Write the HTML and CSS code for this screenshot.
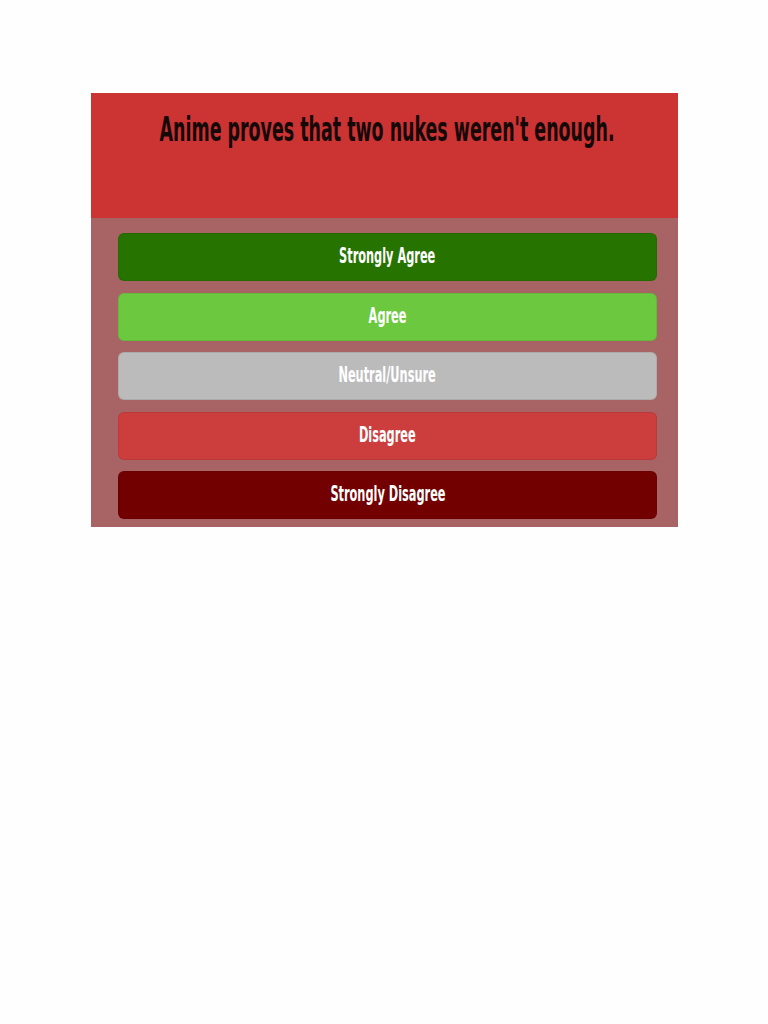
FILE: index.html
```html
<!DOCTYPE html>
<html lang="en">
<head>
    <meta charset="UTF-8" />
    <meta name="viewport" content="width=device-width, initial-scale=1.0" />
    <title>Quiz</title>
    <link rel="stylesheet" href="styles.css">
</head>
<body>
    <div class="card">
        <div class="question">
            <h2><span class="squeeze">Anime proves that two nukes weren't enough.</span></h2>
        </div>
        <div class="answers">
            <button class="answer strong-agree"><span class="squeeze">Strongly Agree</span></button>
            <button class="answer agree"><span class="squeeze">Agree</span></button>
            <button class="answer neutral"><span class="squeeze">Neutral/Unsure</span></button>
            <button class="answer disagree"><span class="squeeze">Disagree</span></button>
            <button class="answer strong-disagree"><span class="squeeze">Strongly Disagree</span></button>
        </div>
    </div>
</body>
</html>
```

FILE: styles.css
```css
body {
    margin: 0;
    background-color: #fefefe;
    font-family: "DejaVu Sans Condensed", "DejaVu Sans", sans-serif;
}
.card {
    width: 587px;
    margin-left: 91px;
    margin-top: 93px;
}
.question {
    height: 125px;
    background-color: #cc3333;
    padding-top: 16px;
    box-sizing: border-box;
    overflow: hidden;
}
h2 {
    margin: 0;
    display: flex;
    justify-content: center;
    font-size: 34px;
    font-weight: 700;
    line-height: 40px;
    color: #140808;
    padding-left: 6px;
}
.squeeze {
    display: inline-block;
    transform: scaleX(0.57);
    white-space: nowrap;
}
.answers {
    background-color: #a86464;
    padding: 15px 21px 8px 27px;
    display: flex;
    flex-direction: column;
    gap: 11.5px;
}
.answer {
    height: 48px;
    border: 1px solid rgba(0, 0, 0, 0.08);
    border-radius: 6px;
    color: white;
    font-family: inherit;
    font-size: 21px;
    font-weight: 700;
    cursor: pointer;
    display: flex;
    justify-content: center;
    align-items: center;
    overflow: hidden;
}
.answer .squeeze {
    transform: scaleX(0.6);
    margin-top: -2px;
}
.strong-agree {
    background-color: #267300;
}
.agree {
    background-color: #6cc93f;
}
.neutral {
    background-color: #bbbbbb;
}
.disagree {
    background-color: #cc3e3e;
}
.strong-disagree {
    background-color: #730000;
}
```
